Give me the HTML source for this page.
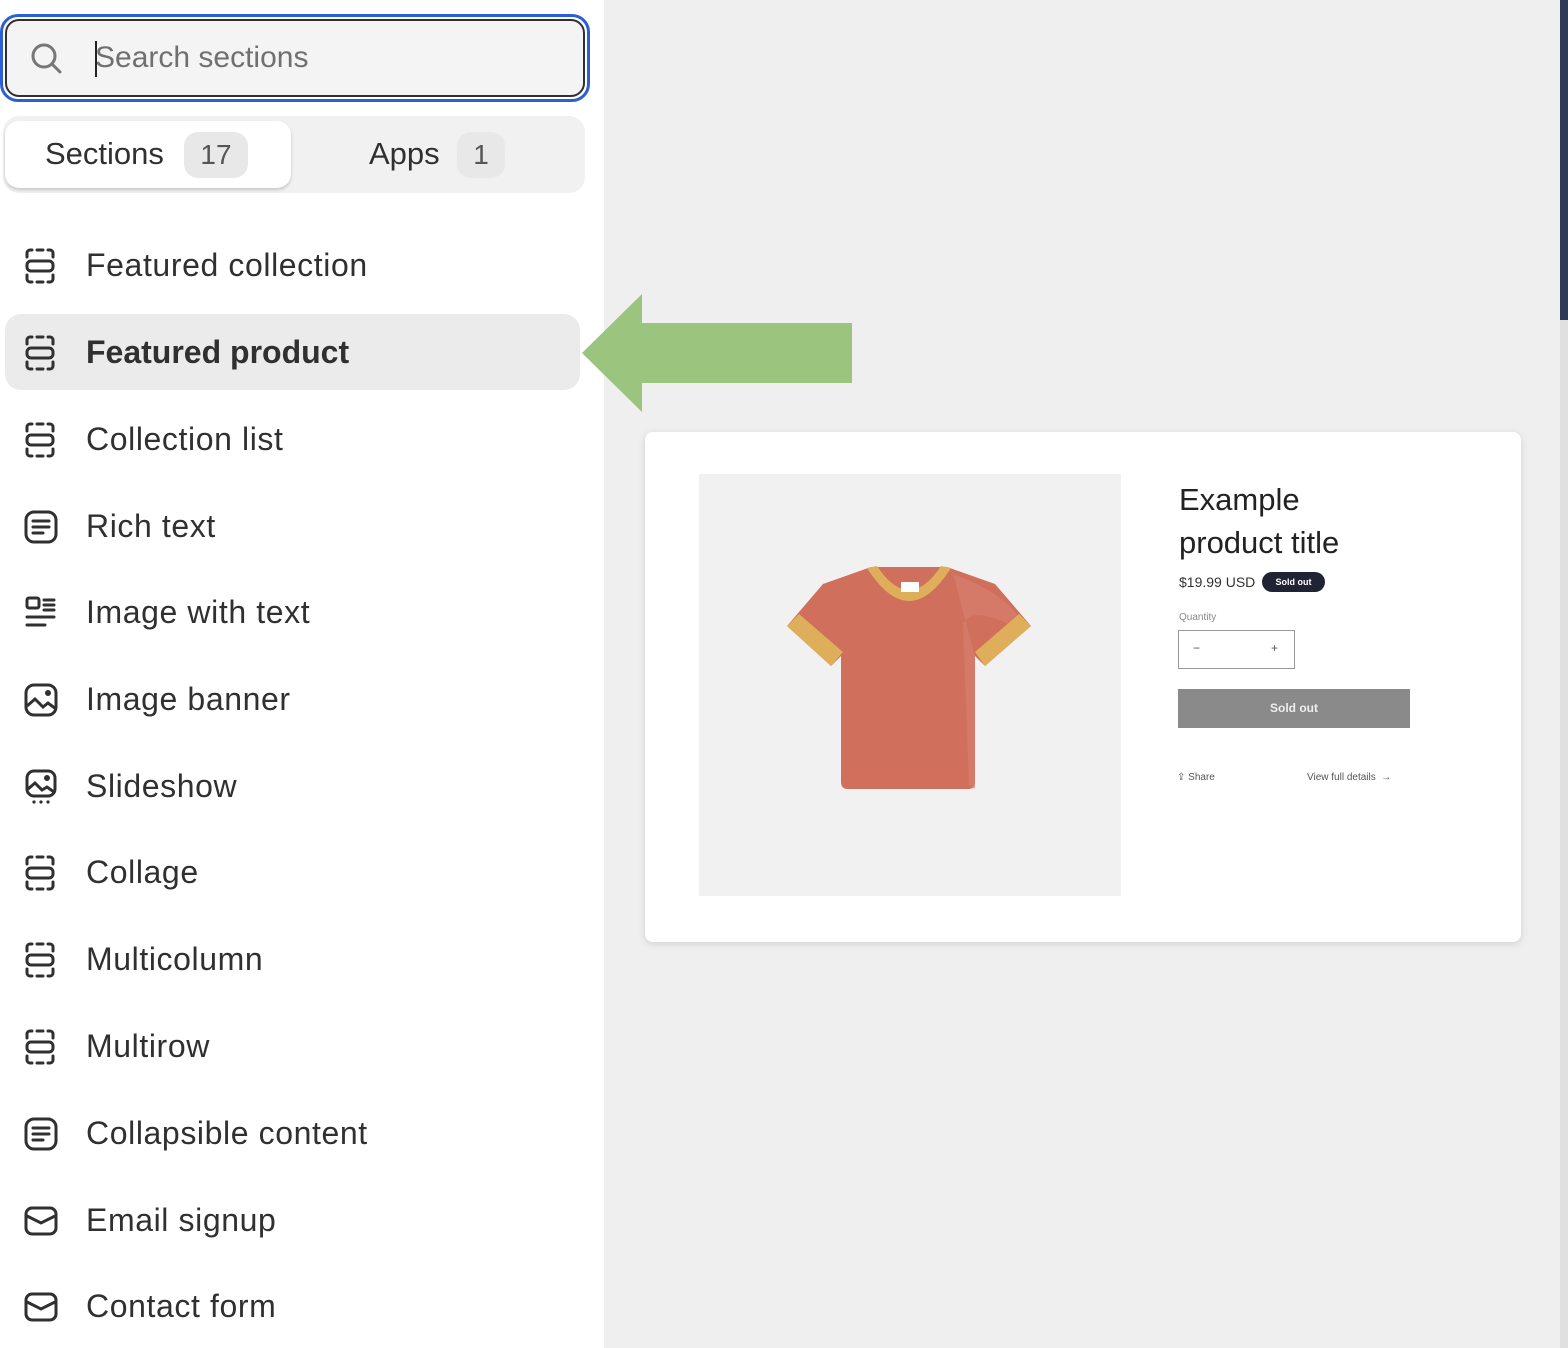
<!DOCTYPE html>
<html><head><meta charset="utf-8"><style>
*{margin:0;padding:0;box-sizing:border-box}
body{width:1568px;height:1348px;overflow:hidden;background:#efefef;font-family:"Liberation Sans",sans-serif;position:relative}
.left{position:absolute;left:0;top:0;width:604px;height:1348px;background:#fff}
.search{position:absolute;left:0;top:14px;width:590px;height:88px;border:3px solid #2c5fd6;border-radius:18px;padding:2px}
.search .in{width:100%;height:100%;border:2px solid #303030;border-radius:14px;background:#f4f4f4;position:relative}
.search .ph{position:absolute;left:88px;top:20px;font-size:30px;color:#707070}
.search .caret{position:absolute;left:88px;top:20px;width:2px;height:36px;background:#222}
.tabs{position:absolute;left:3px;top:116px;width:582px;height:77px;background:#f1f1f1;border-radius:16px}
.tab1{position:absolute;left:2px;top:5px;width:286px;height:67px;background:#fff;border-radius:14px;box-shadow:0 2px 3px rgba(0,0,0,.18)}
.tl{position:absolute;font-size:31px;color:#303030}
.badge{position:absolute;background:#e8e8e8;border-radius:14px;font-size:28px;color:#555;text-align:center;line-height:46px;height:46px}
.row{position:absolute;left:5px;width:575px;height:76px;border-radius:16px}
.row.sel{background:#ebebeb}
.row svg{position:absolute;left:19px;top:21px}
.row span{position:absolute;left:81px;top:20px;font-size:32px;color:#303030;letter-spacing:0.6px}
.row.sel span{font-weight:bold;letter-spacing:0}
.card{position:absolute;left:645px;top:432px;width:876px;height:510px;background:#fff;border-radius:8px;box-shadow:0 2px 8px rgba(0,0,0,.12)}
.img{position:absolute;left:54px;top:42px;width:422px;height:422px;background:#f1f1f1}
.p{position:absolute;color:#222}
</style></head><body>
<div class="left">
 <div class="search"><div class="in">
  <svg style="position:absolute;left:22px;top:20px" width="36" height="36" viewBox="0 0 36 36"><circle cx="15" cy="15" r="11" fill="none" stroke="#777" stroke-width="3"/><path d="M23 23l8 8" stroke="#777" stroke-width="3" stroke-linecap="round"/></svg>
  <div class="ph">Search sections</div><div class="caret"></div>
 </div></div>
 <div class="tabs">
  <div class="tab1"></div>
  <div class="tl" style="left:42px;top:20px">Sections</div>
  <div class="badge" style="left:181px;top:16px;width:64px">17</div>
  <div class="tl" style="left:366px;top:20px">Apps</div>
  <div class="badge" style="left:454px;top:16px;width:48px">1</div>
 </div>
</div>
<svg width="0" height="0" style="position:absolute"><defs>
<g id="dash"><path d="M3 9V5a3 3 0 0 1 3-3h2M13 2h6M24 2h2a3 3 0 0 1 3 3v4M3 27v4a3 3 0 0 0 3 3h2M13 34h6M24 34h2a3 3 0 0 0 3-3v-4" fill="none" stroke="#303030" stroke-width="3" stroke-linecap="round"/><rect x="3" y="13" width="26" height="10" rx="4" fill="none" stroke="#303030" stroke-width="3"/></g>
<g id="rich"><rect x="2" y="3" width="30" height="30" rx="8" fill="none" stroke="#303030" stroke-width="3"/><path d="M9 12h16M9 18h16M9 24h10" stroke="#303030" stroke-width="3" stroke-linecap="round"/></g>
<g id="iwt"><rect x="3" y="3" width="12" height="10" rx="2" fill="none" stroke="#303030" stroke-width="3"/><path d="M20 5h10M20 10h10M20 15h10M3 22h27M3 30h18" stroke="#303030" stroke-width="3" stroke-linecap="round"/></g>
<g id="ban"><rect x="2" y="3" width="30" height="30" rx="8" fill="none" stroke="#303030" stroke-width="3"/><path d="M3 24l8-7 8 8 5-4 8 6" fill="none" stroke="#303030" stroke-width="3"/><circle cx="24" cy="11" r="3" fill="#303030"/></g>
<g id="slide"><rect x="3" y="2" width="28" height="25" rx="7" fill="none" stroke="#303030" stroke-width="3"/><path d="M4 20l7-6 7 7 5-3 7 5" fill="none" stroke="#303030" stroke-width="3"/><circle cx="23" cy="9" r="3" fill="#303030"/><circle cx="10" cy="33" r="1.6" fill="#303030"/><circle cx="17" cy="33" r="1.6" fill="#303030"/><circle cx="24" cy="33" r="1.6" fill="#303030"/></g>
<g id="mail"><rect x="2" y="5" width="30" height="26" rx="6" fill="none" stroke="#303030" stroke-width="3"/><path d="M3 13l14 7 14-7" fill="none" stroke="#303030" stroke-width="3"/></g>
</defs></svg>
<div class="row" style="top:227px"><svg width="36" height="36"><use href="#dash"/></svg><span>Featured collection</span></div>
<div class="row sel" style="top:314px"><svg width="36" height="36"><use href="#dash"/></svg><span>Featured product</span></div>
<div class="row" style="top:401px"><svg width="36" height="36"><use href="#dash"/></svg><span>Collection list</span></div>
<div class="row" style="top:488px"><svg width="36" height="36"><use href="#rich"/></svg><span>Rich text</span></div>
<div class="row" style="top:574px"><svg width="36" height="36"><use href="#iwt"/></svg><span>Image with text</span></div>
<div class="row" style="top:661px"><svg width="36" height="36"><use href="#ban"/></svg><span>Image banner</span></div>
<div class="row" style="top:748px"><svg width="36" height="36"><use href="#slide"/></svg><span>Slideshow</span></div>
<div class="row" style="top:834px"><svg width="36" height="36"><use href="#dash"/></svg><span>Collage</span></div>
<div class="row" style="top:921px"><svg width="36" height="36"><use href="#dash"/></svg><span>Multicolumn</span></div>
<div class="row" style="top:1008px"><svg width="36" height="36"><use href="#dash"/></svg><span>Multirow</span></div>
<div class="row" style="top:1095px"><svg width="36" height="36"><use href="#rich"/></svg><span>Collapsible content</span></div>
<div class="row" style="top:1182px"><svg width="36" height="36"><use href="#mail"/></svg><span>Email signup</span></div>
<div class="row" style="top:1268px"><svg width="36" height="36"><use href="#mail"/></svg><span>Contact form</span></div>

<svg style="position:absolute;left:0;top:0" width="1568" height="1348">
<polygon points="582,353 642,294 642,323 852,323 852,383 642,383 642,412" fill="#9bc47f"/>
<rect x="1560" y="0" width="8" height="320" fill="#2d3b55"/>
<rect x="1560" y="320" width="8" height="1028" fill="#e0e0e0"/>
</svg>

<div class="card">
 <div class="img">
  <svg style="position:absolute;left:84px;top:90px" width="254" height="230" viewBox="0 0 254 230">
   <path d="M88 3 L40 20 L4 62 L48 102 L58 92 L58 218 Q58 225 65 225 L185 225 Q192 225 192 218 L192 92 L202 102 L248 62 L212 20 L164 3 Z" fill="#cf6f5c"/>
   <path d="M170 10 Q225 30 240 60 L235 65 Q190 40 180 60 L186 222 L192 225 L192 92 Z" fill="#d98070" opacity=".6"/>
   <path d="M4 62 L16 50 L60 88 L48 102 Z" fill="#dfae5a"/>
   <path d="M248 62 L236 50 L192 88 L202 102 Z" fill="#dfae5a"/>
   <path d="M84 4 Q126 70 168 4 L158 2 Q126 50 94 2 Z" fill="#dfae5a"/>
   <rect x="118" y="18" width="18" height="10" fill="#fff"/>
  </svg>
 </div>
 <div class="p" style="left:534px;top:46px;font-size:31px;line-height:43px;color:#222">Example<br>product title</div>
 <div class="p" style="left:534px;top:142px;font-size:14px;color:#333">$19.99 USD</div>
 <div style="position:absolute;left:617px;top:140px;width:63px;height:20px;background:#1f2333;border-radius:10px;color:#fff;font-size:9px;font-weight:bold;text-align:center;line-height:20px">Sold out</div>
 <div class="p" style="left:534px;top:180px;font-size:10px;color:#888">Quantity</div>
 <div style="position:absolute;left:533px;top:198px;width:117px;height:39px;border:1px solid #999"><span style="position:absolute;left:14px;top:10px;font-size:12px;color:#555">−</span><span style="position:absolute;left:92px;top:10px;font-size:12px;color:#555">+</span></div>
 <div style="position:absolute;left:533px;top:257px;width:232px;height:39px;background:#8a8a8a;color:#eee;font-size:12px;font-weight:bold;text-align:center;line-height:39px">Sold out</div>
 <div class="p" style="left:532px;top:340px;font-size:10px;color:#555">⇪ Share</div>
 <div class="p" style="left:662px;top:340px;font-size:10px;color:#555">View full details &nbsp;→</div>
</div>
</body></html>
